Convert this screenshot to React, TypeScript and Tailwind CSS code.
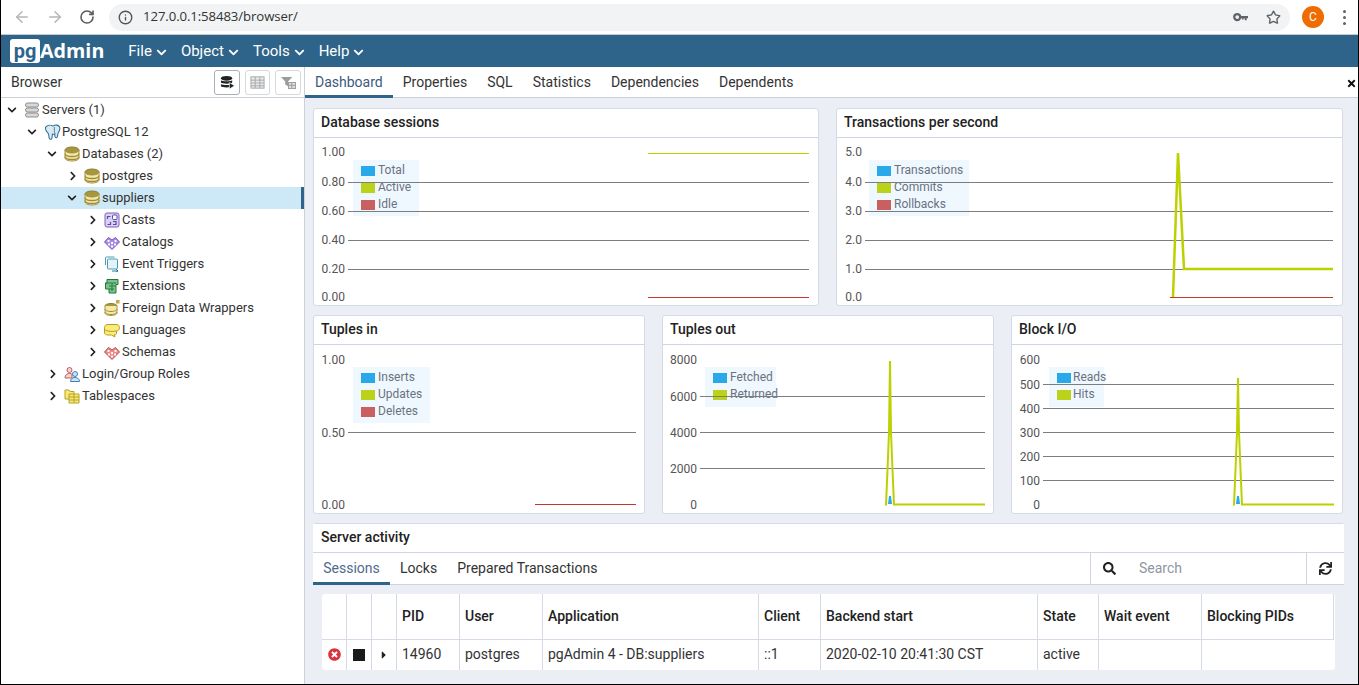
import { ArrowLeft, ArrowRight, RotateCw, Info, Star } from "lucide-react";
import { FaChevronDown, FaChevronRight, FaSearch, FaSync, FaTimes, FaTimesCircle, FaCaretRight } from "react-icons/fa";

type Row = { label: string; level: number; open?: boolean; icon: keyof typeof icons; selected?: boolean };
type Series = { color: string; width: number; points: string };
type ChartProps = {
  title: string;
  ox: number;
  oy: number;
  w: number;
  h: number;
  labelRight: number;
  ticks: [string, number][];
  gridFrom: number;
  gridTo: number;
  grid: number[];
  legend: [string, string][];
  legendBox: [number, number, number, number];
  legendTextX?: number;
  series: Series[];
};

const Db = () => (
  <svg viewBox="0 0 16 16" className="h-[16px] w-[16px]">
    <ellipse cx="8" cy="4" rx="7" ry="3" fill="#a8963c" stroke="#8f7f33" />
    <path d="M1 4v8c0 1.700 3.100 3 7 3s7-1.300 7-3V4c0 1.700-3.100 3-7 3S1 5.700 1 4z" fill="#f3e9a8" stroke="#a8964a" />
    <path d="M1 7.500c0 1.700 3.100 3 7 3s7-1.300 7-3M1 10.500c0 1.700 3.100 3 7 3s7-1.300 7-3" fill="none" stroke="#a08c38" strokeWidth="1.300" />
  </svg>
);

const icons = {
  servers: () => (
    <svg viewBox="0 0 16 16" className="h-4 w-4">
      <rect x="1.500" y="1" width="13" height="4" rx="2" fill="#d8d8d8" stroke="#8c8c8c" />
      <rect x="1.500" y="6" width="13" height="4" rx="2" fill="#d8d8d8" stroke="#8c8c8c" />
      <rect x="1.500" y="11" width="13" height="4" rx="2" fill="#d8d8d8" stroke="#8c8c8c" />
    </svg>
  ),
  pg: () => (
    <svg viewBox="0 0 16 16" className="h-[17px] w-[17px]">
      <path d="M2 2.500C4 .5 7 1 8.500 2c2-1.500 5-1.200 6 .5 1 1.800-.2 4.500-1.200 6-.4.700-.3 2-.8 3.500-.4 1-1.500 1.200-2 .2-.3-.8-.1-2-.6-2.700-.8.300-1.500.300-2 0-.2 1.500 0 3.500-.8 4.500-.8.800-2 .3-2.300-1-.3-1.500-.1-3-1-4.500C2.200 7 .5 4.500 2 2.500z" fill="#d9e8f2" stroke="#2f6f96" strokeWidth="1" />
      <path d="M10 3c-.5 2-.5 4.500.5 6.500" fill="none" stroke="#2f6f96" strokeWidth=".8" />
    </svg>
  ),
  db: Db,
  casts: () => (
    <svg viewBox="0 0 16 16" className="h-4 w-4">
      <rect x="1" y="1" width="14" height="14" rx="2" fill="#d9d0f2" stroke="#7b62c4" />
      <rect x="8.500" y="3" width="4.500" height="4.500" rx="1" fill="#fff" stroke="#5a4aa8" />
      <path d="M3.500 7V4.500h3M3.500 12.500h3V10M9 9.500h3v3H9" fill="none" stroke="#5a4aa8" strokeWidth="1.200" />
    </svg>
  ),
  catalogs: () => (
    <svg viewBox="0 0 16 16" className="h-4 w-4">
      <path d="M8 15.500 .5 8l4-4.500L8 6l3.500-2.500 4 4.500z" fill="#a98be6" stroke="#7a55c4" />
      <path d="M4.500 7h.1M8 9h.1M11.500 7h.1M8 12.500h.1M5 10.500h.1M11 10.500h.1" stroke="#fff" strokeWidth="1.800" strokeLinecap="square" />
    </svg>
  ),
  triggers: () => (
    <svg viewBox="0 0 16 16" className="h-4 w-4">
      <rect x="3.500" y="3" width="10" height="10" rx="1" fill="#e2f4f8" stroke="#4a9cb4" />
      <path d="M1.500 9V2a1 1 0 0 1 1-1h8" fill="none" stroke="#4a9cb4" />
      <path d="M8 15h6m-2-2 2 2-2 1" fill="none" stroke="#2a7c94" />
    </svg>
  ),
  extensions: () => (
    <svg viewBox="0 0 16 16" className="h-4 w-4">
      <path d="M3 1.500h11v5h-2V15H5v-4H1.500V5H3z" fill="#7fc08a" stroke="#1f7a3a" />
      <path d="M1.500 5H12M5 8h7M5 11h5M8 5v8" stroke="#1f7a3a" strokeWidth=".9" />
    </svg>
  ),
  fdw: () => (
    <svg viewBox="0 0 16 16" className="h-4 w-4">
      <ellipse cx="7" cy="6" rx="6" ry="2.500" fill="#a8963c" stroke="#8f7f33" />
      <path d="M1 6v7c0 1.400 2.700 2.500 6 2.500s6-1.100 6-2.500V6" fill="#f3e9a8" stroke="#a8964a" />
      <path d="M1 9c0 1.400 2.700 2.500 6 2.500S13 10.400 13 9M1 12c0 1.400 2.700 2.500 6 2.500s6-1.100 6-2.500" fill="none" stroke="#a08c38" />
      <rect x="12" y="0" width="3.500" height="3.500" fill="#c4a84a" />
    </svg>
  ),
  languages: () => (
    <svg viewBox="0 0 16 16" className="h-4 w-4">
      <path d="M4 2.500h8c2 0 3.500 1 3.500 3s-1.500 3.500-3 3.500v2.500c0 1-1 1.500-2.500 1.500l1 2-3.500-2H4c-2 0-3.500-1-3.500-2V5.500c0-2 1.500-3 3.500-3z" fill="#fbeb7a" stroke="#b59f1e" />
      <path d="M.5 7.500C4 10 9 9.500 12.500 9" stroke="#b59f1e" fill="none" />
    </svg>
  ),
  schemas: () => (
    <svg viewBox="0 0 16 16" className="h-4 w-4">
      <path d="M8 15.500 .5 8l4-4.500L8 6l3.500-2.500 4 4.500z" fill="#e98b8b" stroke="#c24a4a" />
      <path d="M4.500 7h.1M8 9h.1M11.500 7h.1M8 12.500h.1M5 10.500h.1M11 10.500h.1" stroke="#fff" strokeWidth="1.800" strokeLinecap="square" />
    </svg>
  ),
  roles: () => (
    <svg viewBox="0 0 16 16" className="h-4 w-4">
      <circle cx="5.500" cy="4" r="2.500" fill="#f6d5d5" stroke="#c25a5a" />
      <path d="M1 12c0-3 2-4.500 4.500-4.500S8 8 8 10v2z" fill="#f6d5d5" stroke="#c25a5a" />
      <circle cx="11" cy="8" r="2.500" fill="#cfe3f6" stroke="#3f7fc0" />
      <path d="M6.500 15.500c0-2.500 2-4 4.500-4s4.500 1.500 4.500 4z" fill="#cfe3f6" stroke="#3f7fc0" />
    </svg>
  ),
  tablespaces: () => (
    <svg viewBox="0 0 16 16" className="h-4 w-4">
      <path d="M1 2h4l1 1.500h4V11H1z" fill="#f7e97a" stroke="#b8a31e" />
      <path d="M5 6h10v9H5z" fill="#f7e97a" stroke="#b8a31e" />
      <path d="M5 9h10M5 12h10M10 6v9" stroke="#b8a31e" />
    </svg>
  ),
};

const tree: Row[] = [
  { label: "Servers (1)", level: 0, open: true, icon: "servers" },
  { label: "PostgreSQL 12", level: 1, open: true, icon: "pg" },
  { label: "Databases (2)", level: 2, open: true, icon: "db" },
  { label: "postgres", level: 3, icon: "db" },
  { label: "suppliers", level: 3, open: true, icon: "db", selected: true },
  { label: "Casts", level: 4, icon: "casts" },
  { label: "Catalogs", level: 4, icon: "catalogs" },
  { label: "Event Triggers", level: 4, icon: "triggers" },
  { label: "Extensions", level: 4, icon: "extensions" },
  { label: "Foreign Data Wrappers", level: 4, icon: "fdw" },
  { label: "Languages", level: 4, icon: "languages" },
  { label: "Schemas", level: 4, icon: "schemas" },
  { label: "Login/Group Roles", level: 2, icon: "roles" },
  { label: "Tablespaces", level: 2, icon: "tablespaces" },
];

const BLUE = "#2aa9ea";
const GREEN = "#bcd21a";
const RED = "#c9605f";
const LINE_GREEN = "#bdd000";
const LINE_RED = "#c0392b";

const Chart = (c: ChartProps) => (
  <div className="flex flex-col rounded-[3px] border border-[#d5dae6] bg-white">
    <div className="flex h-[29px] shrink-0 items-center border-b border-[#ced4e2] pb-[2px] pl-[7px] text-[14px] font-medium text-[#222]">{c.title}</div>
    <svg width={c.w} height={c.h} viewBox={`${c.ox} ${c.oy} ${c.w} ${c.h}`} className="block">
      <rect x={c.legendBox[0]} y={c.legendBox[1]} width={c.legendBox[2]} height={c.legendBox[3]} fill="#f0f8ff" />
      {c.legend.map(([name, color], i) => (
        <g key={name}>
          <rect x={c.legendBox[0] + 8} y={c.legendBox[1] + 6 + i * 17} width={14} height={10} fill={color} />
          <text x={c.legendBox[0] + (c.legendTextX ?? 25)} y={c.legendBox[1] + 10 + i * 17} dominantBaseline="central" className="fill-[#6a7280] text-[12px]">
            {name}
          </text>
        </g>
      ))}
      {c.grid.map((y) => (
        <line key={y} x1={c.gridFrom} x2={c.gridTo} y1={y + 0.5} y2={y + 0.5} stroke="#7d7d7d" />
      ))}
      {c.ticks.map(([t, y]) => (
        <text key={t} x={c.labelRight} y={y} textAnchor="end" dominantBaseline="central" className="fill-[#555] text-[12px]">
          {t}
        </text>
      ))}
      {c.series.map((s, i) => (
        <polyline key={i} points={s.points} fill="none" stroke={s.color} strokeWidth={s.width} />
      ))}
    </svg>
  </div>
);

const columns = [
  { name: "", value: "" },
  { name: "", value: "" },
  { name: "", value: "" },
  { name: "PID", value: "14960" },
  { name: "User", value: "postgres" },
  { name: "Application", value: "pgAdmin 4 - DB:suppliers" },
  { name: "Client", value: "::1" },
  { name: "Backend start", value: "2020-02-10 20:41:30 CST" },
  { name: "State", value: "active" },
  { name: "Wait event", value: "" },
  { name: "Blocking PIDs", value: "" },
];

export default function App() {
  return (
    <div className="flex h-[685px] w-[1359px] flex-col overflow-hidden border-x border-b border-x-black border-b-black bg-white font-[Roboto,sans-serif] text-[#333]">
      {/* browser chrome */}
      <div className="relative flex h-[35px] shrink-0 items-center border-b border-[#c8cacc] bg-white">
        <ArrowLeft className="ml-[12px] h-[18px] w-[18px] text-[#b4b6b8]" strokeWidth={2} />
        <ArrowRight className="ml-[15px] h-[18px] w-[18px] text-[#b4b6b8]" strokeWidth={2} />
        <RotateCw className="ml-[15px] h-[16px] w-[16px] text-[#5a5c5e]" strokeWidth={2.4} />
        <div className="ml-[14px] flex h-[27px] w-[1181px] items-center rounded-full bg-[#f1f3f4] pl-[9px]">
          <Info className="h-[15px] w-[15px] text-[#555]" strokeWidth={2.2} />
          <span className="ml-[10px] font-['Open_Sans',sans-serif] text-[13.2px] tracking-[-0.1px] text-[#333]">
            127.0.0.1:58483/browser/
          </span>
          <svg viewBox="0 0 16 10" className="ml-auto h-[10px] w-[15px]">
            <circle cx="4.500" cy="5" r="3.200" fill="none" stroke="#5f6368" strokeWidth="2.400" />
            <path d="M7.500 3.800H16v2.400h-1.500V8.500h-2V6.200h-1.200v1.500H9.500V6.200h-2z" fill="#5f6368" />
          </svg>
          <Star className="ml-[18px] mr-[9px] h-[15px] w-[15px] text-[#5f6368]" strokeWidth={2.2} />
        </div>
        <div className="ml-[12px] flex h-[22px] w-[22px] items-center justify-center rounded-full bg-[#ee6c00] text-[12px] text-white">C</div>
        <div className="ml-[19px] flex flex-col gap-[3px]">
          <span className="h-[3px] w-[3px] rounded-full bg-[#5f6368]" />
          <span className="h-[3px] w-[3px] rounded-full bg-[#5f6368]" />
          <span className="h-[3px] w-[3px] rounded-full bg-[#5f6368]" />
        </div>
      </div>

      {/* pgAdmin navbar */}
      <div className="flex h-[32px] shrink-0 items-center bg-[#2e6489] text-white">
        <div className="ml-[9px] flex items-center">
          <span className="flex h-[24px] w-[30px] items-center justify-center rounded-[3px] bg-white text-[20px] leading-none font-bold text-[#2e6489]">pg</span>
          <span className="font-['Open_Sans',sans-serif] text-[19.7px] leading-none font-bold">Admin</span>
        </div>
        <div className="ml-[24px] flex items-center gap-[14px] text-[15px]">
          {["File", "Object", "Tools", "Help"].map((m) => (
            <span key={m} className="flex items-center gap-[4px]">
              {m}
              <FaChevronDown className="mt-[2px] h-[11px] w-[11px]" />
            </span>
          ))}
        </div>
      </div>

      <div className="flex min-h-0 flex-1">
        {/* browser tree */}
        <div className="flex w-[304px] shrink-0 flex-col border-r border-[#ccd0d8]">
          <div className="flex h-[31px] shrink-0 items-center border-b border-[#ccd0d8] pl-[10px] pr-[3px] text-[14px] text-[#333]">
            <span>Browser</span>
            <div className="ml-auto flex gap-[5px]">
              <span className="flex h-[25px] w-[26px] items-center justify-center rounded-[3px] border border-[#a9b0b8] bg-white">
                <svg viewBox="0 0 16 16" className="h-[15px] w-[15px]">
                  <ellipse cx="7" cy="3.500" rx="6" ry="2.500" fill="#222" />
                  <path d="M1 5.500c1 1.600 11 1.600 12 0V8c-1 1.600-11 1.600-12 0zM1 9.500c1 1.600 11 1.600 12 0V12c-1 1.600-11 1.600-12 0z" fill="#222" />
                  <path d="M10 8v7l5.500-3.500z" fill="#222" stroke="#fff" strokeWidth=".7" />
                </svg>
              </span>
              <span className="flex h-[25px] w-[25px] items-center justify-center rounded-[3px] border border-[#d6d9de] bg-white">
                <svg viewBox="0 0 16 16" className="h-[15px] w-[15px]">
                  <rect x="1" y="2" width="14" height="12" fill="#eceded" stroke="#a3a5a7" />
                  <path d="M1 5.500h14M1 8.500h14M1 11.500h14M5.500 2v12M10.500 2v12" stroke="#a3a5a7" />
                </svg>
              </span>
              <span className="flex h-[25px] w-[26px] items-center justify-center rounded-[3px] border border-[#d6d9de] bg-white">
                <svg viewBox="0 0 16 16" className="h-[15px] w-[15px]">
                  <path d="M0 2h12L7.500 7v5L4.500 10V7z" fill="#9a9c9e" />
                  <rect x="8" y="8" width="7.500" height="6.500" fill="#ddd" stroke="#9a9c9e" />
                  <path d="M8 11h7.500M11.500 8v6.500" stroke="#9a9c9e" />
                </svg>
              </span>
            </div>
          </div>
          <div className="pt-[1px] text-[13px] text-[#333]">
            {tree.map((r) => {
              const Icon = icons[r.icon];
              return (
                <div
                  key={r.label}
                  className={`flex h-[22px] items-center ${r.selected ? "border-r-[3px] border-[#2e6489] bg-[#cde8f7]" : ""}`}
                  style={{ paddingLeft: 6 + r.level * 20 }}
                >
                  <span className="flex w-[17px] shrink-0 items-center">
                    {r.open ? <FaChevronDown className="h-[10px] w-[10px] text-[#222]" /> : <FaChevronRight className="ml-[1px] h-[10px] w-[10px] text-[#222]" />}
                  </span>
                  <span className="flex w-[18px] shrink-0 items-center">
                    <Icon />
                  </span>
                  <span>{r.label}</span>
                </div>
              );
            })}
          </div>
        </div>

        {/* dashboard panel */}
        <div className="flex min-w-0 flex-1 flex-col">
          <div className="relative flex h-[31px] shrink-0 items-stretch border-b border-[#ccd0d8] text-[14px]">
            {["Dashboard", "Properties", "SQL", "Statistics", "Dependencies", "Dependents"].map((t, i) => (
              <span
                key={t}
                className={`flex items-center px-[10px] ${i === 0 ? "-mb-px border-b-[3px] border-[#2e6489] pt-[3px] text-[#3c5a80]" : "text-[#333]"}`}
              >
                {t}
              </span>
            ))}
            <FaTimes className="absolute right-[1px] top-[11px] h-[11px] w-[11px] text-[#111]" />
          </div>
          <div className="flex min-h-0 flex-1 flex-col gap-[9px] bg-[#ebeef5] pl-2 pr-[14px] pt-[10px]">
            <div className="grid grid-cols-[506px_507px] gap-[17px]">
              <Chart
                title="Database sessions"
                ox={314}
                oy={138}
                w={504}
                h={167}
                labelRight={345}
                ticks={[["1.00", 152], ["0.80", 182], ["0.60", 211], ["0.40", 240], ["0.20", 269], ["0.00", 297]]}
                gridFrom={348}
                gridTo={809}
                grid={[182, 211, 240, 269]}
                legend={[["Total", BLUE], ["Active", GREEN], ["Idle", RED]]}
                legendBox={[353, 160, 66, 56]}
                series={[
                  { color: LINE_GREEN, width: 1, points: "648,153.500 809,153.500" },
                  { color: LINE_RED, width: 1, points: "648,297.500 809,297.500" },
                ]}
              />
              <Chart
                title="Transactions per second"
                ox={837}
                oy={138}
                w={505}
                h={167}
                labelRight={862}
                ticks={[["5.0", 152], ["4.0", 182], ["3.0", 211], ["2.0", 240], ["1.0", 269], ["0.0", 297]]}
                gridFrom={865}
                gridTo={1333}
                grid={[182, 211, 240, 269]}
                legend={[["Transactions", BLUE], ["Commits", GREEN], ["Rollbacks", RED]]}
                legendBox={[869, 160, 100, 56]}
                series={[
                  { color: LINE_RED, width: 1, points: "1170,297.500 1333,297.500" },
                  { color: LINE_GREEN, width: 2.500, points: "1173,297 1178,153 1184,269 1333,269" },
                ]}
              />
            </div>
            <div className="grid grid-cols-[332px_332px_332px] gap-[17px]">
              <Chart
                title="Tuples in"
                ox={314}
                oy={345}
                w={330}
                h={168}
                labelRight={345}
                ticks={[["1.00", 360], ["0.50", 433], ["0.00", 505]]}
                gridFrom={348}
                gridTo={636}
                grid={[432]}
                legend={[["Inserts", BLUE], ["Updates", GREEN], ["Deletes", RED]]}
                legendBox={[353, 367, 77, 56]}
                series={[{ color: LINE_RED, width: 1, points: "535,504.500 636,504.500" }]}
              />
              <Chart
                title="Tuples out"
                ox={663}
                oy={345}
                w={330}
                h={168}
                labelRight={697}
                ticks={[["8000", 360], ["6000", 397], ["4000", 433], ["2000", 469], ["0", 505]]}
                gridFrom={700}
                gridTo={985}
                grid={[396, 432, 468]}
                legend={[["Fetched", BLUE], ["Returned", GREEN]]}
                legendBox={[705, 367, 71, 40]}
                series={[
                  { color: LINE_GREEN, width: 2, points: "885,504.500 886,504.500 887.500,470 889,432 890,361 891,432 892.500,470 894,504.500 985,504.500" },
                  { color: BLUE, width: 2, points: "889,504 890,496 891,504" },
                ]}
              />
              <Chart
                title="Block I/O"
                ox={1012}
                oy={345}
                w={330}
                h={168}
                labelRight={1040}
                ticks={[["600", 360], ["500", 385], ["400", 409], ["300", 433], ["200", 457], ["100", 481], ["0", 505]]}
                gridFrom={1043}
                gridTo={1334}
                grid={[384, 408, 432, 456, 480]}
                legend={[["Reads", BLUE], ["Hits", GREEN]]}
                legendBox={[1049, 367, 55, 40]}
                legendTextX={24}
                series={[
                  { color: LINE_GREEN, width: 2, points: "1233,504.500 1234,504.500 1235.500,470 1237,432 1238,378 1239,432 1240.500,470 1242,504.500 1334,504.500" },
                  { color: BLUE, width: 2, points: "1237,504 1238,496 1239,504" },
                ]}
              />
            </div>

            {/* server activity */}
            <div className="flex flex-col rounded-t-[3px] border-t border-[#d5dae6]">
              <div className="flex h-[29px] items-center border-b border-[#ced4e2] bg-white pb-[1px] pl-2 text-[14px] font-medium text-[#222]">Server activity</div>
              <div className="flex h-[32px] items-stretch border-b border-[#ced4e2] bg-white text-[14px]">
                <span className="-mb-px flex w-[77px] items-center justify-center border-b-[3px] border-[#2e6489] pt-[2px] text-[#4f6a8c]">Sessions</span>
                <span className="flex items-center px-[10px]">Locks</span>
                <span className="flex items-center px-[10px]">Prepared Transactions</span>
                <div className="ml-auto flex w-[254px] items-center border-l border-[#ced4e2]">
                  <FaSearch className="ml-[12px] h-[13px] w-[13px] text-[#222]" />
                  <span className="ml-[23px] text-[#8e96a4]">Search</span>
                  <span className="ml-auto flex h-full w-[38px] items-center justify-center border-l border-[#ced4e2]">
                    <FaSync className="h-[13px] w-[13px] text-[#222]" />
                  </span>
                </div>
              </div>
              <div className="mx-[9px] mt-[9px] grid grid-cols-[25px_25px_25px_63px_83px_216px_62px_217px_61px_103px_132px] overflow-hidden rounded-[3px] bg-white text-[14px]">
                {columns.map((c, i) => (
                  <div key={i} className="flex h-[46px] items-center border-r border-b border-[#d5dae6] pl-[5px] font-medium text-[#222] last:border-r-0">
                    {c.name}
                  </div>
                ))}
                {columns.map((c, i) => (
                  <div key={i} className="flex h-[30px] items-center justify-center border-r border-[#d5dae6] pb-[1px] text-[#333] last:border-r-0">
                    {i === 0 && <FaTimesCircle className="h-[13px] w-[13px] text-[#d9333f]" />}
                    {i === 1 && <span className="h-[12px] w-[12px] bg-[#1a1a1a]" />}
                    {i === 2 && <FaCaretRight className="h-[12px] w-[12px] text-[#222]" />}
                    {i > 2 && <span className="w-full pl-[5px]">{c.value}</span>}
                  </div>
                ))}
              </div>
            </div>
          </div>
        </div>
      </div>
    </div>
  );
}
